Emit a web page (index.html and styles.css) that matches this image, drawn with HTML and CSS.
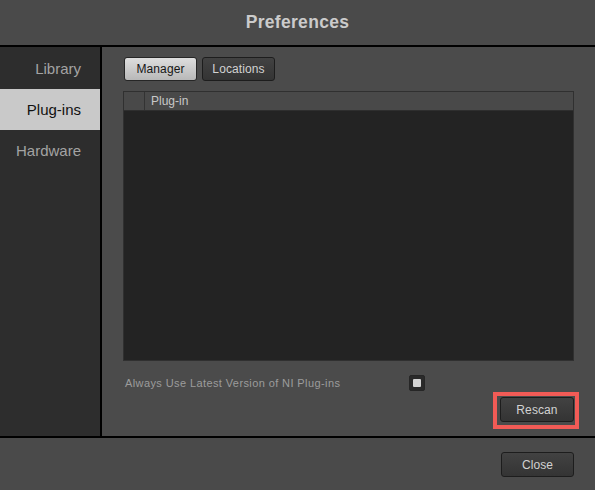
FILE: index.html
```html
<!DOCTYPE html>
<html>
<head>
<meta charset="utf-8">
<link rel="stylesheet" href="styles.css">
</head>
<body>
<div class="window">
  <header class="header"><h1 class="title">Preferences</h1></header>
  <div class="main">
    <nav class="sidebar">
      <div class="nav-item">Library</div>
      <div class="nav-item active">Plug-ins</div>
      <div class="nav-item">Hardware</div>
    </nav>
    <section class="content">
      <div class="tabs">
        <button class="btn btn-light">Manager</button>
        <button class="btn">Locations</button>
      </div>
      <div class="table">
        <div class="thead">
          <div class="th-check"></div>
          <div class="th-name">Plug-in</div>
        </div>
        <div class="tbody"></div>
      </div>
      <div class="option">
        <span class="option-label">Always Use Latest Version of NI Plug-ins</span>
        <span class="checkbox"><span class="checkbox-mark"></span></span>
      </div>
      <div class="rescan-row">
        <span class="highlight"><button class="btn">Rescan</button></span>
      </div>
    </section>
  </div>
  <footer class="footer">
    <button class="btn">Close</button>
  </footer>
</div>
</body>
</html>
```
FILE: styles.css
```css
* { box-sizing: border-box; }
html, body { margin: 0; padding: 0; }
body {
  width: 595px;
  height: 490px;
  background: #4a4a4a;
  font-family: "Liberation Sans", Arial, sans-serif;
  overflow: hidden;
}
.window { width: 595px; height: 490px; display: flex; flex-direction: column; }
.header {
  height: 47px;
  border-bottom: 2px solid #000;
  display: flex;
  align-items: center;
  justify-content: center;
  background: #4a4a4a;
}
.title {
  margin: 0;
  font-size: 17.5px;
  font-weight: bold;
  color: #cbcbcb;
  letter-spacing: 0.3px;
}
.main {
  display: flex;
  height: 391px;
  border-bottom: 2px solid #000;
}
.sidebar {
  width: 102px;
  background: #2d2d2d;
  border-right: 2px solid #000;
  padding-top: 1px;
}
.nav-item {
  height: 41px;
  display: flex;
  align-items: center;
  justify-content: flex-end;
  padding-right: 19px;
  font-size: 15px;
  color: #a3a3a3;
}
.nav-item.active {
  background: #c9c9c9;
  color: #111;
}
.content {
  flex: 1;
  background: #4b4b4b;
  padding: 10px 21px 0 21px;
  display: flex;
  flex-direction: column;
}
.tabs { display: flex; gap: 5px; padding-left: 1px; }
.btn {
  width: 73px;
  height: 24px;
  border: 1px solid #1d1d1d;
  border-radius: 3px;
  background: linear-gradient(#424242, #343434);
  color: #d2d2d2;
  font-family: "Liberation Sans", Arial, sans-serif;
  font-size: 12px;
  letter-spacing: 0.1px;
  padding: 0;
  display: flex;
  align-items: center;
  justify-content: center;
}
.btn-light {
  background: linear-gradient(#dedede, #b8b8b8);
  color: #151515;
  border-color: #262626;
}
.table {
  margin-top: 10px;
  height: 270px;
  border: 1px solid #303030;
  display: flex;
  flex-direction: column;
}
.thead {
  height: 19px;
  display: flex;
  background: #494949;
  border-bottom: 1px solid #2e2e2e;
}
.th-check { width: 21px; border-right: 1px solid #333; }
.th-name {
  padding-left: 6px;
  font-size: 12px;
  color: #c8c8c8;
  display: flex;
  align-items: center;
}
.tbody { flex: 1; background: #232323; }
.option {
  margin-top: 13px;
  height: 17px;
  display: flex;
  align-items: center;
  padding-left: 2px;
}
.option-label {
  width: 284px;
  font-size: 11px;
  color: #9c9c9c;
  letter-spacing: 0.4px;
}
.checkbox {
  width: 16px;
  height: 16px;
  border-radius: 2px;
  background: #2a2a2a;
  border: 1px solid #262626;
  display: flex;
  align-items: center;
  justify-content: center;
}
.checkbox-mark {
  width: 8px;
  height: 8px;
  border-radius: 1px;
  background: #d4d4d4;
}
.rescan-row {
  margin-top: 1px;
  display: flex;
  justify-content: flex-end;
  margin-right: -5px;
}
.highlight {
  display: flex;
  border: 4px solid #f25b56;
  padding: 1px 1px 3px 3px;
}
.highlight .btn { width: 74px; height: 25px; }
.footer {
  flex: 1;
  display: flex;
  justify-content: flex-end;
  align-items: flex-start;
  padding: 14px 21px 0 0;
}
.footer .btn { height: 25px; }
```
